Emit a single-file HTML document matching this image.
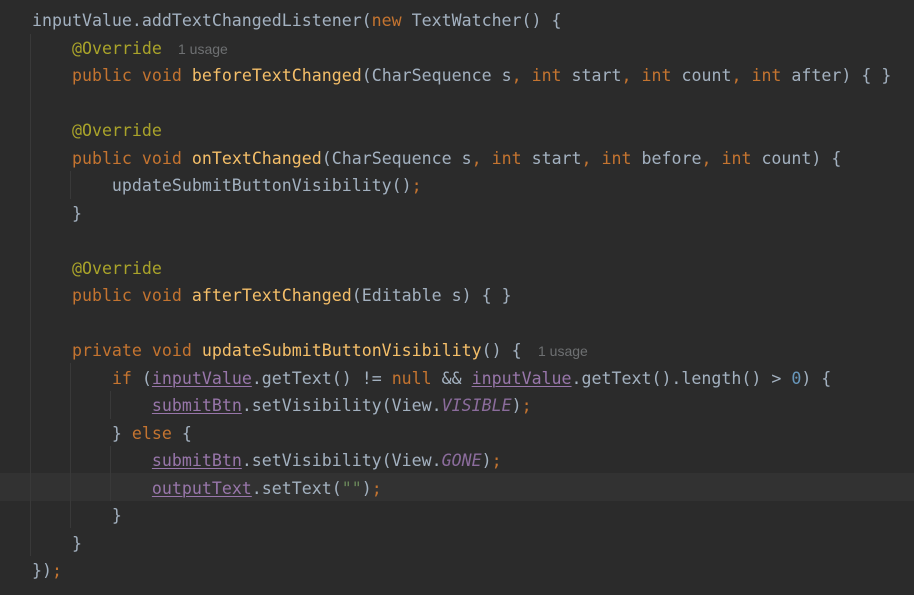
<!DOCTYPE html>
<html>
<head>
<meta charset="utf-8">
<style>
html,body{margin:0;padding:0;background:#2b2b2b;}
#e{position:relative;width:914px;height:595px;overflow:hidden;background:#2b2b2b;font-family:"DejaVu Sans Mono","Liberation Mono",monospace;font-size:16.6px;color:#a3b1c0;}
.l{position:absolute;left:32px;height:28px;line-height:28px;white-space:pre;}
.k{color:#c47430}
.m{color:#f5bf69}
.a{color:#a9a32a}
.f{color:#9876aa;text-decoration:underline;text-decoration-thickness:1px;text-underline-offset:2px;}
.c{color:#8b6c9c;font-style:italic}
.s{color:#6a8759}
.n{color:#6897bb}
.u{position:absolute;height:28px;line-height:28px;font-family:"Liberation Sans",sans-serif;font-size:14px;color:#6e7072;white-space:pre;}
.g{position:absolute;width:1px;background:#393939;}
.h{position:absolute;left:0;top:473px;width:914px;height:28px;background:#323232;}
</style>
</head>
<body>
<div id="e">
<div class="h"></div>
<div class="g" style="left:30px;top:34px;height:522px"></div>
<div class="g" style="left:70px;top:171px;height:28px"></div>
<div class="g" style="left:70px;top:363px;height:165px"></div>
<div class="g" style="left:110px;top:391px;height:28px"></div>
<div class="g" style="left:110px;top:446px;height:55px"></div>
<div class="l" style="top:7px">inputValue.addTextChangedListener(<span class="k">new</span> TextWatcher() {</div>
<div class="l" style="top:35px">    <span class="a">@Override</span></div>
<div class="u" style="left:178px;top:35px">1 usage</div>
<div class="l" style="top:62px">    <span class="k">public void</span> <span class="m">beforeTextChanged</span>(CharSequence s<span class="k">,</span> <span class="k">int</span> start<span class="k">,</span> <span class="k">int</span> count<span class="k">,</span> <span class="k">int</span> after) { }</div>
<div class="l" style="top:117px">    <span class="a">@Override</span></div>
<div class="l" style="top:145px">    <span class="k">public void</span> <span class="m">onTextChanged</span>(CharSequence s<span class="k">,</span> <span class="k">int</span> start<span class="k">,</span> <span class="k">int</span> before<span class="k">,</span> <span class="k">int</span> count) {</div>
<div class="l" style="top:172px">        updateSubmitButtonVisibility()<span class="k">;</span></div>
<div class="l" style="top:200px">    }</div>
<div class="l" style="top:255px">    <span class="a">@Override</span></div>
<div class="l" style="top:282px">    <span class="k">public void</span> <span class="m">afterTextChanged</span>(Editable s) { }</div>
<div class="l" style="top:337px">    <span class="k">private void</span> <span class="m">updateSubmitButtonVisibility</span>() {</div>
<div class="u" style="left:538px;top:337px">1 usage</div>
<div class="l" style="top:365px">        <span class="k">if</span> (<span class="f">inputValue</span>.getText() != <span class="k">null</span> &amp;&amp; <span class="f">inputValue</span>.getText().length() &gt; <span class="n">0</span>) {</div>
<div class="l" style="top:392px">            <span class="f">submitBtn</span>.setVisibility(View.<span class="c">VISIBLE</span>)<span class="k">;</span></div>
<div class="l" style="top:420px">        } <span class="k">else</span> {</div>
<div class="l" style="top:447px">            <span class="f">submitBtn</span>.setVisibility(View.<span class="c">GONE</span>)<span class="k">;</span></div>
<div class="l" style="top:475px">            <span class="f">outputText</span>.setText(<span class="s">""</span>)<span class="k">;</span></div>
<div class="l" style="top:502px">        }</div>
<div class="l" style="top:530px">    }</div>
<div class="l" style="top:557px">})<span class="k">;</span></div>
</div>
</body>
</html>
